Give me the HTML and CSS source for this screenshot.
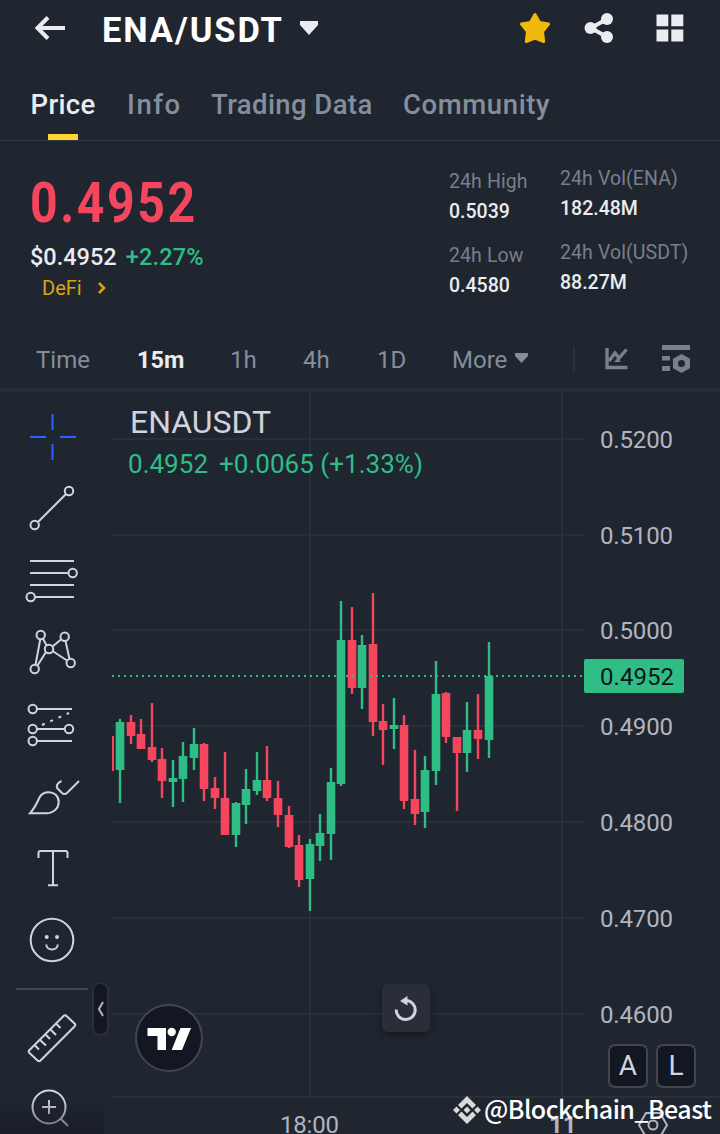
FILE: index.html
```html
<!DOCTYPE html>
<html lang="en">
<head>
    <meta charset="UTF-8">
    <meta name="viewport" content="width=device-width, initial-scale=1.0">
    <title>ENA/USDT</title>
    <link rel="stylesheet" href="styles.css">
</head>
<body>
    <header class="topbar">
        <svg class="back" width="32" height="26" viewBox="0 0 32 26">
            <path d="M31 13H4M14 2.500L3.500 13L14 23.500" fill="none" stroke="#eaecef" stroke-width="4"/>
        </svg>
        <h1 class="pair">ENA/USDT</h1>
        <svg class="caret" width="18" height="14" viewBox="0 0 18 14">
            <path d="M0 0H18V4L9 14L0 4Z" fill="#eaecef"/>
        </svg>
        <div class="actions">
            <svg width="32" height="32" viewBox="0 0 32 32">
                <path d="M16 2.500L20.500 10.500L29.500 12L23.500 19.500L24.700 29.500L16 26L7.300 29.500L8.500 19.500L2.500 12L11.500 10.500Z" fill="#f0b90b" stroke="#f0b90b" stroke-width="3" stroke-linejoin="round"/>
            </svg>
            <svg width="30" height="32" viewBox="0 0 30 32">
                <path d="M23 7L7 16L23 25" fill="none" stroke="#eaecef" stroke-width="4"/>
                <g fill="#eaecef">
                    <circle cx="23" cy="7" r="6"/>
                    <circle cx="6.500" cy="16" r="6"/>
                    <circle cx="23" cy="25" r="6"/>
                </g>
            </svg>
            <svg width="28" height="28" viewBox="0 0 28 28">
                <path d="M0.500 0.500H12.300V12.300H0.500ZM15.300 0.500H27.300V12.300H15.300ZM0.500 15.500H12.300V27.500H0.500ZM15.300 15.500H27.300V27.500H15.300Z" fill="#eaecef"/>
            </svg>
        </div>
    </header>

    <nav class="tabs">
        <a class="tab tab-price active">Price</a>
        <a class="tab tab-info">Info</a>
        <a class="tab tab-data">Trading Data</a>
        <a class="tab tab-community">Community</a>
    </nav>

    <section class="ticker">
        <div class="quote">
            <div class="last-price">0.4952</div>
            <div class="sub-price">
                <span class="fiat">$0.4952</span>
                <span class="change">+2.27%</span>
            </div>
            <div class="tag">
                <span>DeFi</span>
                <svg width="10" height="12" viewBox="0 0 10 12">
                    <path d="M2 1L7 6L2 11" fill="none" stroke="#d9a50f" stroke-width="2.500"/>
                </svg>
            </div>
        </div>
        <div class="stats">
            <div class="stat"><span class="label">24h High</span><span class="value">0.5039</span></div>
            <div class="stat"><span class="label">24h Low</span><span class="value">0.4580</span></div>
        </div>
        <div class="stats volume">
            <div class="stat"><span class="label">24h Vol(ENA)</span><span class="value">182.48M</span></div>
            <div class="stat"><span class="label">24h Vol(USDT)</span><span class="value">88.27M</span></div>
        </div>
    </section>

    <nav class="intervals">
        <span class="int-time">Time</span>
        <span class="int-15m active">15m</span>
        <span class="int-1h">1h</span>
        <span class="int-4h">4h</span>
        <span class="int-1d">1D</span>
        <span class="int-more">More
            <svg width="13" height="10" viewBox="0 0 13 10"><path d="M0 0H13V3L6.500 10L0 3Z" fill="#848e9c"/></svg>
        </span>
        <i class="divider"></i>
        <svg class="indicator" width="24" height="24" viewBox="0 0 24 24">
            <path d="M2 1V20.500H22.500M4 14L10 6L14 11L21.500 2.500" fill="none" stroke="#76808f" stroke-width="3.400"/>
            <path d="M9 15L12.500 11L16 15Z" fill="#76808f"/>
        </svg>
        <svg class="settings" width="29" height="30" viewBox="0 0 29 30">
            <path d="M0 1H28V6H0ZM0 12H8V16.500H0ZM0 22H8V27H0Z" fill="#76808f"/>
            <path d="M19.500 10L28 14.800V24.200L19.500 29L11 24.200V14.800ZM19.500 16A3.500 3.500 0 1 0 19.500 23A3.500 3.500 0 1 0 19.500 16Z" fill="#76808f" fill-rule="evenodd"/>
        </svg>
    </nav>

    <main class="chart">
        <aside class="tools">
            <svg class="tool" viewBox="0 0 104 72">
                <path class="cross" d="M52.500 13V29M52.500 43V59M30 36H46M60 36H76"/>
            </svg>
            <svg class="tool" viewBox="0 0 104 72">
                <path d="M38 49L66 21"/>
                <circle cx="34.700" cy="52" r="4.200"/><circle cx="69" cy="18" r="4.200"/>
            </svg>
            <svg class="tool" viewBox="0 0 104 72">
                <path d="M30 16H74M30 28H68.500M30 40H74M35 52H74"/>
                <circle cx="72.700" cy="28" r="4.200"/><circle cx="30.700" cy="52" r="4.200"/>
            </svg>
            <svg class="tool" viewBox="0 0 104 72">
                <path d="M40.300 22L35.500 48M43 21.500L46.500 28.500M52.500 29.500L61 22.500M65.500 24L69.500 42M52.500 34L67 43.500M46 35L37.500 48.500"/>
                <circle cx="40.700" cy="18" r="4.200"/><circle cx="64.700" cy="19.700" r="4.200"/><circle cx="49" cy="32" r="4.200"/>
                <circle cx="70.700" cy="46" r="4.200"/><circle cx="34.700" cy="52" r="4.200"/>
            </svg>
            <svg class="tool" viewBox="0 0 104 72">
                <path d="M37 20H72M37 40H64.500M37 52H72"/>
                <path d="M42 36L69 24" stroke-dasharray="3 6"/>
                <circle cx="32.700" cy="20" r="4.200"/><circle cx="32.700" cy="40" r="4.200"/><circle cx="69" cy="40" r="4.200"/><circle cx="32.700" cy="52" r="4.200"/>
            </svg>
            <svg class="tool" viewBox="0 0 104 72">
                <path d="M30 52.300H46C54 52.300 58.700 47 58.700 41C58.700 35 54 31.200 49 31.200C44 31.200 41 33 39.500 36.500C37 42 34 48 30 52.300ZM61.500 20C57 22 55.500 25.500 58 28L62 32Q64.500 34 67 32L79 20"/>
            </svg>
            <svg class="tool" viewBox="0 0 104 72">
                <path d="M38.500 25V20Q38.500 18 40.500 18H65.500Q67.500 18 67.500 20V25M53 18V52M48 52.300H58"/>
            </svg>
            <svg class="tool" viewBox="0 0 104 72">
                <circle cx="52" cy="35" r="21.300"/>
                <path d="M46.300 39.500C46.300 46 57.700 46 57.700 39.500"/>
                <g class="solid"><circle cx="46.700" cy="32" r="2"/><circle cx="57" cy="32" r="2"/></g>
            </svg>
            <hr class="tools-line">
            <svg class="tool" viewBox="0 0 104 72">
                <path d="M63.500 14Q65 12.500 66.500 14L74.500 21.500Q76 23 74.500 24.500L40.500 58.500Q39 60 37.500 58.500L29.500 51Q28 49.500 29.500 48ZM34.500 43L39 47.500M40 38L46 43.500M45.500 32.500L50 37M50.500 27.500L56 33M56.500 22L60.500 26"/>
            </svg>
            <svg class="tool" viewBox="0 0 104 72">
                <circle cx="49" cy="33" r="16.500"/>
                <path d="M42 33H56M49 26V40M60.500 44.500L68 52"/>
            </svg>
            <div class="collapse">
                <svg width="8" height="18" viewBox="0 0 8 18"><path d="M6 2L2 9L6 16" fill="none" stroke="#b2b5be" stroke-width="2"/></svg>
            </div>
        </aside>

        <svg class="plot" width="608" height="746" viewBox="112 388 608 746">
            <g id="grid"></g>
            <g class="legend">
                <text class="symbol" x="130" y="433" textLength="141" lengthAdjust="spacingAndGlyphs">ENAUSDT</text>
                <text class="up" x="128" y="473" textLength="80">0.4952</text>
                <text class="up" x="219" y="473" textLength="204">+0.0065 (+1.33%)</text>
            </g>
            <g id="candles"></g>
            <path class="last-line" d="M112 676H584"/>
            <g id="prices"></g>
            <rect x="584" y="659" width="100" height="34" rx="2" fill="#2ebd85"/>
            <text class="last-label" x="600" y="685" textLength="74">0.4952</text>

            <circle cx="169" cy="1038" r="33" fill="#131722" stroke="#434651" stroke-width="2"/>
            <path d="M147.500 1028H166V1050H157.500V1036H147.500ZM180.500 1028H191L182 1050H171.700Z" fill="#fff"/>
            <circle cx="171.700" cy="1032" r="4.200" fill="#fff"/>

            <rect class="reset" x="382" y="984" width="48" height="48" rx="6"/>
            <path d="M396.200 1009.500A9.500 9.500 0 1 0 405.500 1000.500" fill="none" stroke="#d1d4dc" stroke-width="3"/>
            <path d="M407.500 996V1005.500L400 1001Z" fill="#d1d4dc"/>

            <g class="scale-btn">
                <rect x="609" y="1045" width="38" height="42" rx="6"/>
                <rect x="657" y="1045" width="38" height="42" rx="6"/>
                <text x="628" y="1075">A</text>
                <text x="676" y="1075">L</text>
            </g>

            <text class="axis" x="280" y="1133" textLength="59">18:00</text>
            <text class="axis day" x="549" y="1133">11</text>
            <path d="M646 1113H660L667 1125L660 1137H646L639 1125Z" fill="none" stroke="#b2b5be" stroke-width="2"/>
            <circle cx="653" cy="1125" r="4.500" fill="none" stroke="#b2b5be" stroke-width="2"/>

            <g class="watermark">
                <path d="M467 1096L476 1105L472.500 1108.500L467 1103L461.500 1108.500L458 1105ZM467 1124L476 1115L472.500 1111.500L467 1117L461.500 1111.500L458 1115ZM467 1106.500L470.500 1110L467 1113.500L463.500 1110ZM456.500 1106.500L460 1110L456.500 1113.500L453 1110ZM477.500 1106.500L481 1110L477.500 1113.500L474 1110Z"/>
                <text x="484" y="1119" textLength="228">@Blockchain_Beast</text>
            </g>
        </svg>
    </main>

    <script src="chart.js"></script>
</body>
</html>
```

FILE: styles.css
```css
:root {
    --bg: #202630;
    --text: #eaecef;
    --muted: #848e9c;
    --green: #2ebd85;
    --red: #f6465d;
    --yellow: #fcd535;
}

* {
    margin: 0;
    padding: 0;
    box-sizing: border-box;
}

body {
    width: 720px;
    height: 1134px;
    overflow: hidden;
    background: var(--bg);
    color: var(--text);
    font-family: Roboto, "Liberation Sans", sans-serif;
}

svg {
    display: block;
}

.topbar {
    display: flex;
    align-items: center;
    height: 60px;
    padding: 0 36px 4px 34px;
}

.pair {
    width: 184px;
    margin-left: 36px;
    padding-top: 4px;
    color: #fff;
    font-size: 34.5px;
    font-weight: 700;
    letter-spacing: 1.9px;
    white-space: nowrap;
}

.caret {
    margin-left: 14px;
}

.actions {
    display: flex;
    align-items: center;
    margin-left: auto;
}

.actions svg + svg {
    margin-left: 33px;
}

.actions svg:last-child {
    margin-left: 42px;
}

.tabs {
    display: flex;
    height: 81px;
    padding: 27px 0 0 30px;
    border-bottom: 1px solid #333b47;
    font-size: 27.5px;
    font-weight: 500;
    line-height: 36px;
    color: var(--muted);
    white-space: nowrap;
}

.tab-price {
    width: 66px;
    margin-right: 31px;
    letter-spacing: 0.3px;
}

.tab-info {
    width: 53px;
    margin-right: 31px;
    letter-spacing: 1.6px;
}

.tab-data {
    width: 161px;
    margin-right: 31px;
    letter-spacing: 0.4px;
}

.tab-community {
    letter-spacing: 0.6px;
}

.tab.active {
    display: flex;
    flex-direction: column;
    align-items: center;
    justify-content: space-between;
    color: var(--text);
}

.tab.active::after {
    content: "";
    width: 30px;
    height: 6px;
    background: var(--yellow);
}

.ticker {
    display: grid;
    grid-template-columns: 419px 111px 1fr;
    height: 189px;
    padding-left: 30px;
}

.quote {
    padding-top: 30px;
}

.last-price {
    color: var(--red);
    font-size: 56px;
    font-weight: 700;
    line-height: 64px;
    letter-spacing: 3px;
    transform: scaleX(0.86);
    transform-origin: 0 50%;
}

.sub-price {
    display: flex;
    gap: 9px;
    margin-top: 7px;
    font-size: 23.5px;
    font-weight: 500;
    line-height: 30px;
}

.change {
    color: var(--green);
    letter-spacing: 0.2px;
}

.tag {
    display: flex;
    align-items: center;
    gap: 15px;
    margin-top: 3px;
    padding-left: 12px;
    color: #d9a50f;
    font-size: 20px;
    line-height: 26px;
}

.stats {
    display: flex;
    flex-direction: column;
    gap: 15px;
    padding-top: 26px;
}

.stats.volume {
    padding-top: 23px;
}

.stat {
    display: flex;
    flex-direction: column;
    font-size: 19.5px;
    white-space: nowrap;
}

.label {
    color: #767f8d;
    line-height: 30px;
    letter-spacing: 0.1px;
}

.value {
    font-weight: 500;
    line-height: 29px;
}

.intervals {
    display: flex;
    align-items: center;
    height: 58px;
    padding: 1px 0 0 36px;
    color: var(--muted);
    font-size: 24px;
}

.intervals .active {
    color: var(--text);
    font-size: 23.5px;
    font-weight: 700;
}

.int-time {
    width: 101px;
}

.int-15m {
    width: 93px;
}

.int-1h {
    width: 73px;
}

.int-4h {
    width: 74px;
}

.int-1d {
    width: 75px;
}

.int-more {
    display: flex;
    align-items: center;
    gap: 8px;
    width: 121px;
}

.int-more svg {
    margin-bottom: 3px;
}

.divider {
    width: 2px;
    height: 24px;
    margin: 0 30px 2px 0;
    background: #2d343f;
}

.indicator {
    margin-bottom: 2px;
}

.settings {
    margin: 0 0 1px 33px;
}

.chart {
    display: grid;
    grid-template-columns: 112px 608px;
    height: 746px;
    background: linear-gradient(#272c36 4px, transparent 4px);
}

.tools {
    position: relative;
    height: 746px;
    padding-top: 13px;
    overflow: hidden;
}

.tools::after {
    content: "";
    position: absolute;
    left: 0;
    bottom: 0;
    width: 104px;
    height: 36px;
    background: linear-gradient(rgba(19, 23, 34, 0), rgba(19, 23, 34, 0.6));
}

.tool {
    width: 104px;
    height: 72px;
    fill: none;
    stroke: #d1d4dc;
    stroke-width: 2;
}

.tool .cross {
    stroke: #2962ff;
}

.tool .solid {
    fill: #d1d4dc;
    stroke: none;
}

.tools-line {
    width: 72px;
    height: 2px;
    margin: 11px 0 12px 16px;
    border: 0;
    background: #434651;
}

.collapse {
    position: absolute;
    left: 92px;
    top: 594px;
    display: flex;
    align-items: center;
    justify-content: center;
    width: 17px;
    height: 54px;
    border: 2px solid #2a2e39;
    border-radius: 8px;
    background: #131722;
}

.plot text {
    font-family: Roboto, "Liberation Sans", sans-serif;
}

.grid-line {
    stroke: #2a2f3a;
    stroke-width: 2;
}

.plot .symbol {
    fill: #d1d4dc;
    font-size: 32px;
}

.plot .up {
    fill: var(--green);
    font-size: 26px;
}

.bull {
    fill: var(--green);
}

.bear {
    fill: var(--red);
}

.last-line {
    stroke: var(--green);
    stroke-width: 2;
    stroke-dasharray: 2 4;
}

.plot .axis {
    fill: #b2b5be;
    font-size: 24px;
}

.plot .day {
    font-weight: 700;
}

.plot .last-label {
    fill: #10151c;
    font-size: 24px;
}

.reset {
    fill: #2a2e39;
    filter: drop-shadow(0 3px 4px rgba(0, 0, 0, 0.4));
}

.scale-btn rect {
    fill: #131722;
    stroke: #434651;
    stroke-width: 2;
}

.scale-btn text {
    fill: #d1d4dc;
    font-size: 28px;
    text-anchor: middle;
}

.watermark path {
    fill: #d9d9d9;
}

.plot .watermark text {
    fill: #fff;
    font-family: "Noto Sans CJK SC", "Noto Sans", sans-serif;
    font-size: 25px;
    font-weight: 500;
}
```

FILE: chart.js
```js
const NS = 'http://www.w3.org/2000/svg';

const add = (parent, name, attrs, text) => {
    const el = document.createElementNS(NS, name);
    Object.keys(attrs).forEach(key => el.setAttribute(key, attrs[key]));
    if (text) el.textContent = text;
    parent.appendChild(el);
};

const grid = document.getElementById('grid');
const prices = document.getElementById('prices');

// price levels
['0.5200', '0.5100', '0.5000', '0.4900', '0.4800', '0.4700', '0.4600'].forEach((price, i) => {
    const y = Math.round(438.6 + i * 95.9);
    add(grid, 'path', { class: 'grid-line', d: `M112 ${y}H584` });
    add(prices, 'text', { class: 'axis', x: 600, y: y + 9, textLength: 73 }, price);
});

// time lines and bottom axis
add(grid, 'path', { class: 'grid-line', d: 'M310 388V1097M562 388V1097M112 1097H720' });

// [x, high, low, body top, body bottom, bullish]
const candles = [
    [120, 719, 803, 722, 770, 1],
    [131, 715, 744, 722, 736, 0],
    [141, 719, 749, 734, 749, 0],
    [152, 703, 762, 747, 760, 0],
    [162, 748, 798, 759, 781, 0],
    [173, 760, 807, 778, 782, 1],
    [183, 742, 802, 756, 779, 1],
    [194, 728, 770, 744, 758, 1],
    [204, 743, 801, 744, 789, 0],
    [215, 777, 809, 788, 798, 0],
    [225, 752, 835, 798, 835, 0],
    [236, 802, 847, 803, 835, 1],
    [246, 769, 824, 789, 805, 1],
    [257, 752, 795, 780, 791, 1],
    [267, 746, 801, 780, 798, 0],
    [278, 781, 827, 798, 815, 0],
    [289, 806, 848, 815, 847, 0],
    [299, 835, 887, 845, 880, 0],
    [310, 839, 911, 844, 879, 1],
    [320, 814, 861, 833, 846, 1],
    [331, 768, 860, 782, 834, 1],
    [341, 601, 786, 640, 784, 1],
    [352, 607, 694, 640, 688, 0],
    [362, 635, 709, 645, 688, 1],
    [373, 593, 736, 644, 722, 0],
    [383, 704, 765, 721, 730, 0],
    [394, 698, 749, 725, 729, 1],
    [404, 715, 809, 725, 801, 0],
    [415, 750, 825, 799, 814, 0],
    [425, 756, 828, 770, 812, 1],
    [436, 661, 785, 694, 771, 1],
    [446, 692, 743, 693, 737, 0],
    [457, 737, 811, 737, 753, 0],
    [467, 702, 772, 730, 753, 1],
    [478, 694, 759, 730, 739, 0],
    [489, 642, 758, 676, 740, 1]
];

const layer = document.getElementById('candles');

// candle cut off by the left edge
add(layer, 'rect', { class: 'bear', x: 112, y: 736, width: 2, height: 35 });

candles.forEach(([x, high, low, top, bottom, up]) => {
    const cls = up ? 'bull' : 'bear';
    add(layer, 'rect', { class: cls, x: x - 1.2, y: high, width: 2.4, height: low - high });
    add(layer, 'rect', { class: cls, x: x - 4.3, y: top, width: 8.6, height: bottom - top });
});
```
